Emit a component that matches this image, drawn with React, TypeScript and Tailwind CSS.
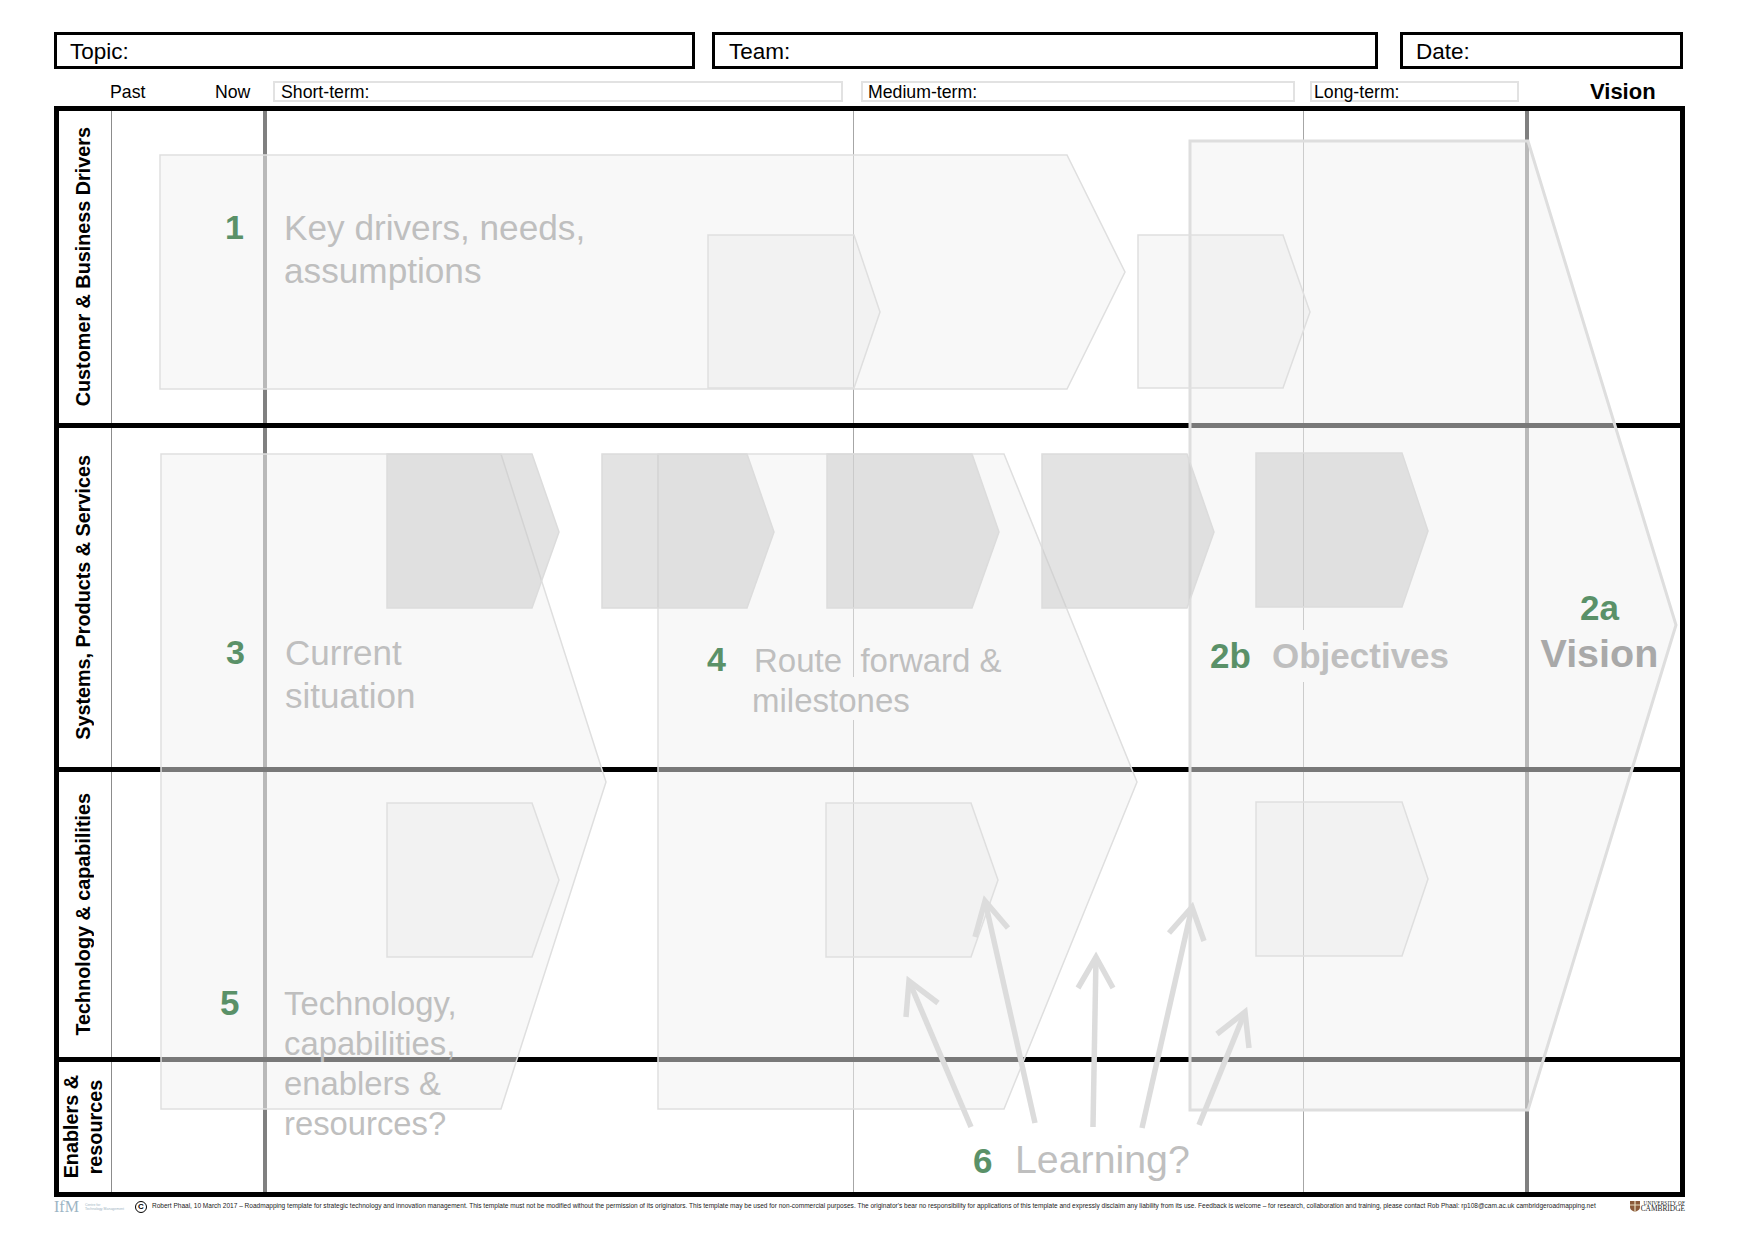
import React from 'react';

const bigShapes = [
  '160,155 1067,155 1125,272 1067,389 160,389',
  '161,454 501,454 606,782 501,1109 161,1109',
  '658,454 1004,454 1137,782 1004,1109 658,1109',
];
const darkShapes = [
  '387,454 532,454 559,532 532,608 387,608',
  '602,454 747,454 774,532 747,608 602,608',
  '827,454 972,454 999,532 972,608 827,608',
  '1042,454 1187,454 1214,532 1187,608 1042,608',
  '1256,453 1402,453 1428,531 1402,607 1256,607',
];
const lightShapes = [
  '708,235 854,235 880,312 854,388 708,388',
  '1138,235 1283,235 1310,312 1283,388 1138,388',
  '387,803 532,803 559,880 532,957 387,957',
  '826,803 971,803 998,880 971,957 826,957',
  '1256,802 1402,802 1428,879 1402,956 1256,956',
];
const arrows = [
  { shaft: '971,1127 909,981', head: '906,1017 909,981 938,1003' },
  { shaft: '1035,1123 985,901', head: '975,937 985,901 1008,928' },
  { shaft: '1093,1127 1096,957', head: '1078,988 1096,957 1113,988' },
  { shaft: '1142,1128 1192,907', head: '1169,933 1192,907 1204,941' },
  { shaft: '1199,1125 1245,1012', head: '1217,1034 1245,1012 1249,1048' },
];

function Row({ label, heightClass, last }: { label: React.ReactNode; heightClass: string; last?: boolean }) {
  return (
    <div className={`flex ${heightClass} ${last ? '' : 'border-b-[5px] border-black'}`}>
      <div className="w-[52.5px] shrink-0 flex items-center justify-center pr-[4px] border-r-[1.5px] border-[#8c8c8c]">
        <div className="[writing-mode:vertical-rl] rotate-180 whitespace-nowrap text-center font-bold text-[19.8px] leading-[24px] text-black">
          {label}
        </div>
      </div>
      <div className="w-[155px] shrink-0 border-r-4 border-[#808080]" />
      <div className="w-[587px] shrink-0 border-r-[1.5px] border-[#a6a6a6]" />
      <div className="w-[450px] shrink-0 border-r-[1.5px] border-[#a6a6a6]" />
      <div className="w-[225.5px] shrink-0 border-r-4 border-[#808080]" />
      <div className="flex-1" />
    </div>
  );
}

export default function App() {
  return (
    <div className="relative w-[1753px] h-[1240px] bg-white overflow-hidden font-['Liberation_Sans',Arial,sans-serif] pl-[54px] pt-[32px]">
      <div className="w-[1631px]">
        {/* Topic / team / date */}
        <div className="flex h-[37px] text-[22.5px] leading-[33px] text-black">
          <div className="w-[641px] border-[3px] border-black pl-[13px]">Topic:</div>
          <div className="w-[666px] ml-[17px] border-[3px] border-black pl-[14px]">Team:</div>
          <div className="w-[283px] ml-[22px] border-[3px] border-black pl-[13px]">Date:</div>
        </div>

        {/* Time axis */}
        <div className="flex items-center h-[21px] mt-[12px] text-[17.7px] leading-[18px] text-black">
          <span className="ml-[56px] w-[105px]">Past</span>
          <span className="w-[58px]">Now</span>
          <div className="w-[570px] h-full border-[2.5px] border-[#e2e2e2] pl-[6px]">Short-term:</div>
          <div className="w-[434px] h-full ml-[18px] border-[2.5px] border-[#e2e2e2] pl-[5px]">Medium-term:</div>
          <div className="w-[209px] h-full ml-[15px] border-[2.5px] border-[#e2e2e2] pl-[2px]">Long-term:</div>
          <span className="ml-[71px] font-bold text-[22px]">Vision</span>
        </div>

        {/* Roadmap grid */}
        <div className="mt-[4px] border-[5px] border-black">
          <Row heightClass="h-[317px]" label="Customer & Business Drivers" />
          <Row heightClass="h-[344px]" label="Systems, Products & Services" />
          <Row heightClass="h-[290px]" label="Technology & capabilities" />
          <Row
            heightClass="h-[129.5px]"
            last
            label={
              <>
                Enablers &amp;
                <br />
                resources
              </>
            }
          />
        </div>

        {/* Footer */}
        <div className="flex items-center h-[18px] mt-px">
          <div className="w-[81px] shrink-0 flex items-center text-[#9db4c4]">
            <span className="font-['Liberation_Serif',serif] text-[16px] leading-none">IfM</span>
            <span className="ml-[6px] text-[3.5px] leading-[4px] whitespace-nowrap">
              Centre for
              <br />
              Technology Management
            </span>
          </div>
          <div className="w-[12px] h-[12px] shrink-0 rounded-full border border-black flex items-center justify-center text-[8px] leading-none font-bold text-black">
            C
          </div>
          <div className="ml-[5px] whitespace-nowrap text-[6.54px] leading-none text-[#222]">
            Robert Phaal, 10 March 2017 – Roadmapping template for strategic technology and innovation management. This template must not be modified without the permission of its originators. This template may be used for non-commercial purposes. The originator's bear no responsibility for applications of this template and expressly disclaim any liability from its use. Feedback is welcome – for research, collaboration and training, please contact Rob Phaal: rp108@cam.ac.uk cambridgeroadmapping.net
          </div>
          <div className="ml-auto flex items-center gap-[1px] font-['Liberation_Serif',serif] text-[#222]">
            <svg width="10" height="11" viewBox="0 0 10 11">
              <path d="M0 0H10V6C10 9 7 10 5 11C3 10 0 9 0 6Z" fill="#8a5a3a" />
              <path d="M5 0V11M0 4H10" stroke="#e8dcc0" strokeWidth="1.2" />
            </svg>
            <div className="text-right">
              <div className="text-[5.2px] leading-[5px] tracking-[0.2px] whitespace-nowrap">UNIVERSITY OF</div>
              <div className="text-[7.4px] leading-[6px] whitespace-nowrap">CAMBRIDGE</div>
            </div>
          </div>
        </div>
      </div>

      {/* Translucent arrows over the grid */}
      <svg className="absolute inset-0" width="1753" height="1240" viewBox="0 0 1753 1240">
        {bigShapes.map((p) => (
          <polygon key={p} points={p} fill="rgba(241,241,241,0.5)" stroke="#dfdfdf" strokeWidth="1.5" />
        ))}
        <polygon
          points="1190,141 1528,141 1676,625 1528,1110 1190,1110"
          fill="rgba(241,241,241,0.5)"
          stroke="#dedede"
          strokeWidth="3"
        />
        {darkShapes.map((p) => (
          <polygon key={p} points={p} fill="rgba(200,200,200,0.5)" stroke="#dcdcdc" strokeWidth="1.5" />
        ))}
        {lightShapes.map((p) => (
          <polygon key={p} points={p} fill="rgba(225,225,225,0.25)" stroke="#dfdfdf" strokeWidth="1.5" />
        ))}
        {/* text boxes hide the time lines */}
        <rect x="846" y="677" width="14" height="43" fill="#f8f8f8" />
        <rect x="1295" y="630" width="14" height="52" fill="#f8f8f8" />
        {arrows.map((a) => (
          <g key={a.shaft} fill="none" stroke="#dcdcdc" strokeWidth="5.5">
            <polyline points={a.shaft} />
            <polyline points={a.head} />
          </g>
        ))}
      </svg>

      {/* Notes */}
      <div className="absolute left-[225px] top-[206px] text-[34px] leading-[43px] font-bold text-[#5a9168]">1</div>
      <div className="absolute left-[284px] top-[207px] text-[35.2px] leading-[42.5px] text-[#bfbfbf] whitespace-nowrap">
        Key drivers, needs,
        <br />
        assumptions
      </div>

      <div className="absolute left-[226px] top-[631px] text-[34px] leading-[43px] font-bold text-[#5a9168]">3</div>
      <div className="absolute left-[285px] top-[631px] text-[35px] leading-[43px] text-[#bfbfbf] whitespace-nowrap">
        Current
        <br />
        situation
      </div>

      <div className="absolute left-[707px] top-[638px] text-[34px] leading-[43px] font-bold text-[#5a9168]">4</div>
      <div className="absolute left-[752px] top-[640.5px] text-[33px] leading-[40px] text-[#bfbfbf] whitespace-pre">
        <span className="ml-[2px]">Route  forward &amp;</span>
        <br />
        milestones
      </div>

      <div className="absolute left-[1210px] top-[634px] text-[35px] leading-[43px] font-bold text-[#5a9168]">2b</div>
      <div className="absolute left-[1272px] top-[634px] text-[35px] leading-[43px] font-bold text-[#bfbfbf]">Objectives</div>

      <div className="absolute left-[1580px] top-[586px] text-[35px] leading-[43px] font-bold text-[#5a9168]">2a</div>
      <div className="absolute left-[1540.5px] top-[630px] text-[39.5px] leading-[46px] font-bold text-[#a9a9a9]">Vision</div>

      <div className="absolute left-[220px] top-[981px] text-[35px] leading-[43px] font-bold text-[#5a9168]">5</div>
      <div className="absolute left-[284px] top-[984px] text-[32.8px] leading-[40px] text-[#bfbfbf] whitespace-nowrap">
        Technology,
        <br />
        capabilities,
        <br />
        enablers &amp;
        <br />
        resources?
      </div>

      <div className="absolute left-[973px] top-[1139px] text-[35px] leading-[43px] font-bold text-[#5a9168]">6</div>
      <div className="absolute left-[1015px] top-[1136px] text-[39.3px] leading-[46px] text-[#bfbfbf] whitespace-nowrap">Learning?</div>
    </div>
  );
}
